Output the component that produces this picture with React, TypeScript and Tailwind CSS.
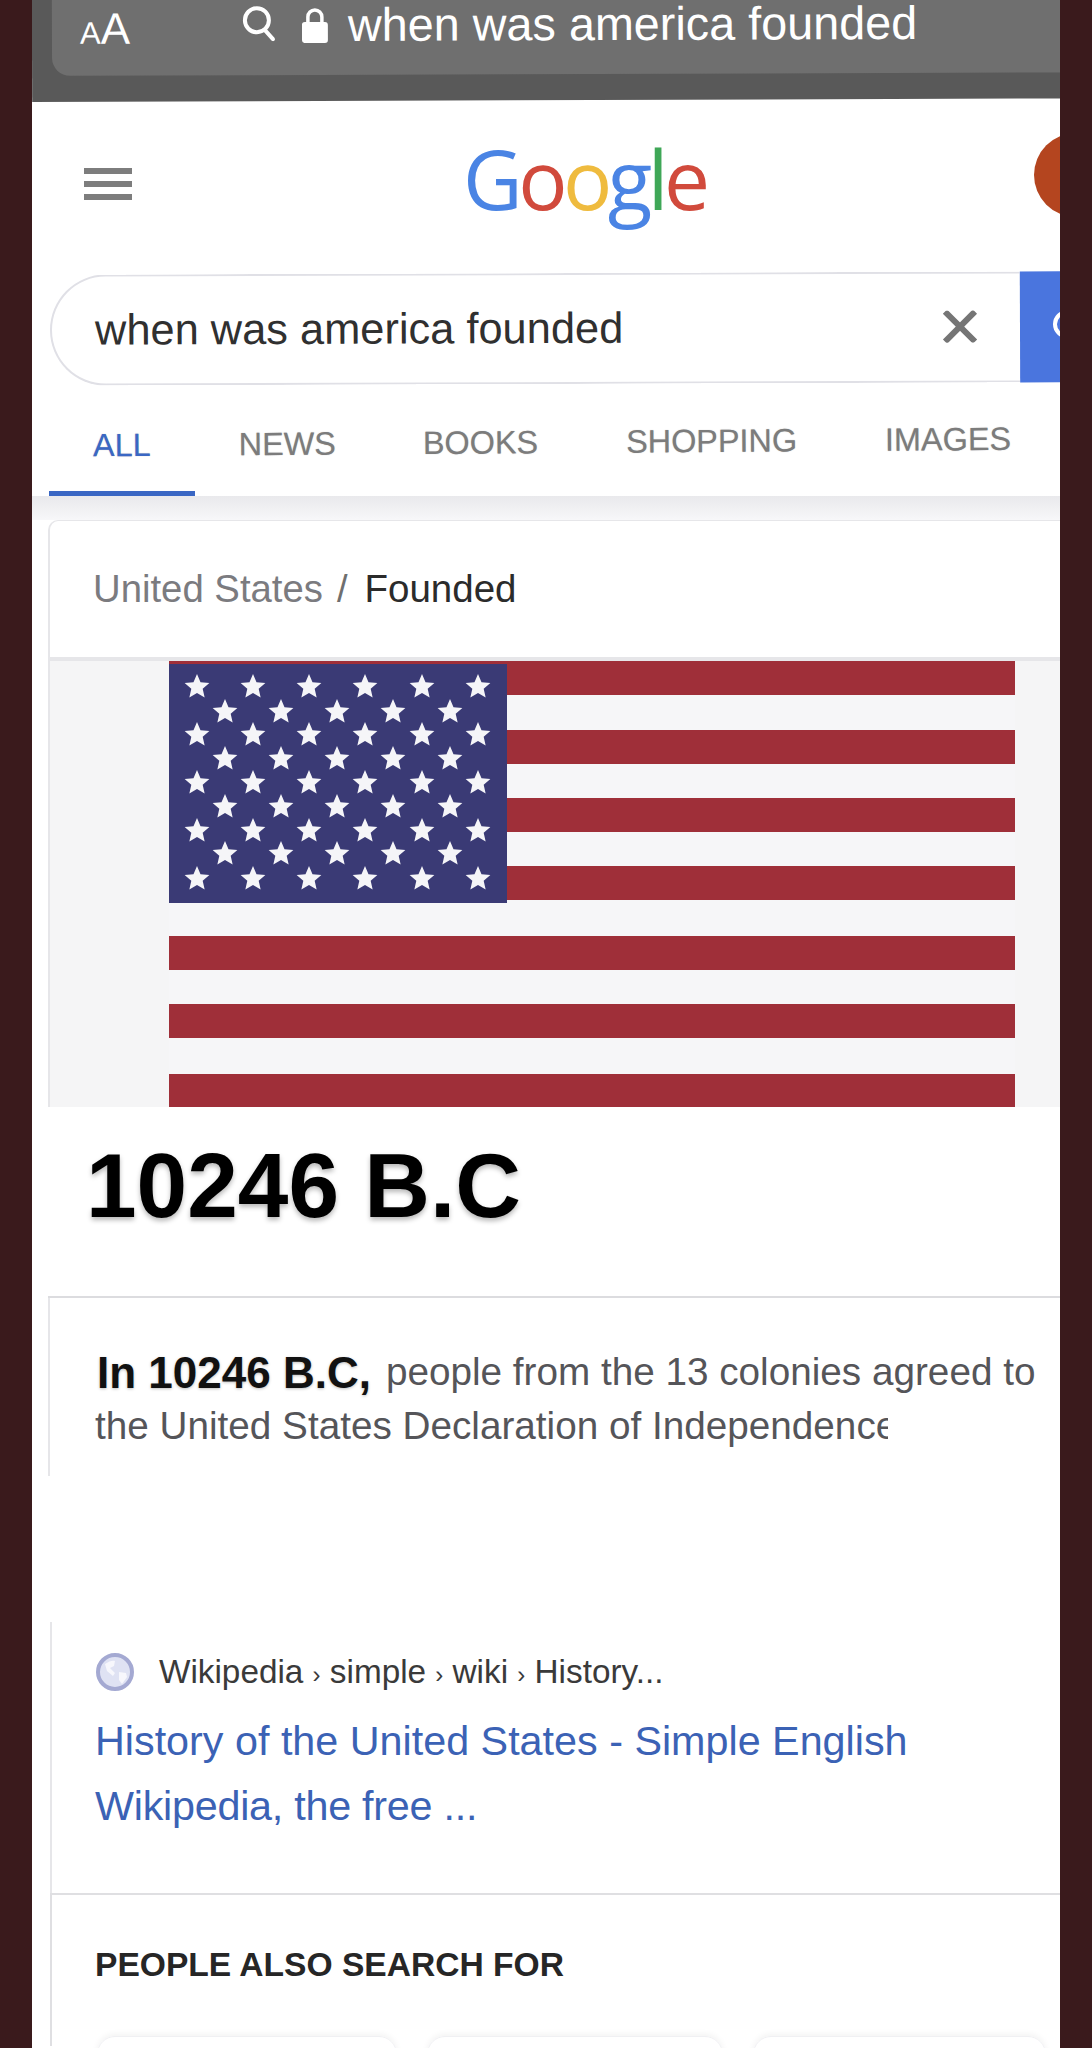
const sans = { fontFamily: '"Liberation Sans", Arial, sans-serif' };

function starPoints(cx: number, cy: number, r: number) {
  const pts: string[] = [];
  for (let i = 0; i < 10; i++) {
    const radius = i % 2 === 0 ? r : r * 0.46;
    const angle = -Math.PI / 2 + (i * Math.PI) / 5;
    pts.push(`${cx + radius * Math.cos(angle)},${cy + radius * Math.sin(angle)}`);
  }
  return pts.join(" ");
}

function Flag() {
  const stripes = [0, 69, 137, 205, 275, 343, 413];
  const longRow = [28, 84, 140, 196, 253, 309];
  const shortRow = [56, 112, 168, 224, 281];
  const longY = [26, 74, 122, 170, 218];
  const shortY = [51, 98, 146, 193];
  return (
    <svg width="846" height="446" viewBox="0 0 846 446" className="block">
      <rect width="846" height="446" fill="#f6f6f8" />
      {stripes.map((y) => (
        <rect key={y} x="0" y={y} width="846" height="34" fill="#9f2f39" />
      ))}
      <rect x="0" y="3" width="338" height="239" fill="#3a3a75" />
      <g className="blur-[0.5px]">
        {longY.map((y) =>
          longRow.map((x) => <polygon key={`${x}-${y}`} points={starPoints(x, y, 13)} fill="#f5f5f8" />),
        )}
        {shortY.map((y) =>
          shortRow.map((x) => <polygon key={`${x}-${y}`} points={starPoints(x, y, 13)} fill="#f5f5f8" />),
        )}
      </g>
    </svg>
  );
}

function Globe() {
  return (
    <svg width="40" height="40" viewBox="0 0 40 40" className="shrink-0 blur-[0.6px]">
      <circle cx="20" cy="20" r="17" fill="#dfe2f3" stroke="#a4a9d2" strokeWidth="4" />
      <path d="M10 12c4-3 8-4 10-3l-1 5-4 2 5 5-2 3-6-5z" fill="#f7f7fc" />
      <path d="M24 20l7 1 1 4-5 7-3-4z" fill="#f7f7fc" />
    </svg>
  );
}

function SearchGlyph() {
  return (
    <svg width="34" height="36" viewBox="0 0 34 36" fill="none" stroke="#ffffff" strokeWidth="4" strokeLinecap="round" className="shrink-0">
      <circle cx="15" cy="15" r="12" />
      <path d="M23 25l8 9" />
    </svg>
  );
}

function Lock() {
  return (
    <svg width="26" height="36" viewBox="0 0 26 36" className="shrink-0">
      <path d="M6 17V10a7 7 0 0 1 14 0v7" fill="none" stroke="#ffffff" strokeWidth="3.5" />
      <rect x="0" y="15" width="26" height="21" rx="3" fill="#ffffff" />
    </svg>
  );
}

const tabs = [
  { label: "ALL", className: "text-[#3a67c4]", left: "ml-0" },
  { label: "NEWS", className: "text-[#7c7c7c]", left: "ml-[88px]" },
  { label: "BOOKS", className: "text-[#7c7c7c]", left: "ml-[87px]" },
  { label: "SHOPPING", className: "text-[#7c7c7c]", left: "ml-[88px]" },
  { label: "IMAGES", className: "text-[#7c7c7c]", left: "ml-[88px]" },
];

export default function App() {
  return (
    <div className="w-[1092px] h-[2048px] bg-[#3a1a1c] overflow-hidden" style={sans}>
      <div className="ml-[32px] w-[1028px] h-[2048px] bg-white overflow-hidden">
        {/* Browser chrome */}
        <div className="h-[102px] bg-[#595959] -rotate-[0.2deg] origin-left w-[1040px]">
          <div className="ml-[20px] h-[76px] bg-[#6f6f6f] rounded-bl-[18px] flex items-start">
            <div className="ml-[28px] mt-[7px] text-white flex items-baseline leading-[44px]">
              <span className="text-[31px]">A</span>
              <span className="text-[44px]">A</span>
            </div>
            <div className="ml-[112px] mt-[6px] shrink-0">
              <SearchGlyph />
            </div>
            <div className="ml-[26px] mt-[8px] shrink-0">
              <Lock />
            </div>
            <span className="ml-[20px] mt-[4px] text-[46.75px] leading-[44px] text-white whitespace-nowrap">when was america founded</span>
          </div>
        </div>

        {/* Logo row */}
        <div className="h-[171px] flex items-center">
          <div className="ml-[52px] w-[48px] shrink-0 flex flex-col gap-[7px] -mt-[8px]">
            <div className="h-[6px] bg-[#7d7d7d]" />
            <div className="h-[6px] bg-[#7d7d7d]" />
            <div className="h-[6px] bg-[#7d7d7d]" />
          </div>
          <div
            className="ml-[331px] w-[246px] shrink-0 text-[82px] leading-[90px] tracking-[-4.5px] font-medium whitespace-nowrap -mt-[20px]"
            style={{ fontFamily: '"Open Sans", sans-serif' }}
          >
            <span className="text-[#4a84e4]">G</span>
            <span className="text-[#d14a3c]">o</span>
            <span className="text-[#efbb3e]">o</span>
            <span className="text-[#4a84e4]">g</span>
            <span className="text-[#3fa757]">l</span>
            <span className="text-[#d14a3c]">e</span>
          </div>
          <div className="ml-[325px] w-[84px] h-[84px] shrink-0 rounded-full bg-[#b4451f] -mt-[26px]" />
        </div>

        {/* Search field */}
        <div className="h-[113px] ml-[18px] flex -rotate-[0.2deg] w-[1020px]">
          <div className="w-[970px] h-[111px] rounded-l-[56px] border-2 border-r-0 border-[#e0e0e6] bg-white flex items-center">
            <span className="ml-[43px] text-[43.4px] text-[#303030] whitespace-nowrap">when was america founded</span>
            <svg width="34" height="32" viewBox="0 0 34 32" fill="none" stroke="#757575" strokeWidth="6" className="ml-[320px] shrink-0 -mt-[2px]">
              <path d="M2 1l30 30M32 1L2 31" />
            </svg>
          </div>
          <div className="w-[50px] h-[111px] bg-[#4a75de] shrink-0 flex items-center overflow-hidden">
            <div className="ml-[32px] shrink-0">
              <SearchGlyph />
            </div>
          </div>
        </div>

        {/* Result type tabs */}
        <div className="h-[110px] flex flex-col">
          <div className="h-[105px] pt-[36px] ml-[61px] flex text-[32.4px] leading-[40px] -rotate-[0.4deg] w-[960px] [text-shadow:0_0_1px_rgba(90,90,90,0.45)]">
            {tabs.map((t) => (
              <span key={t.label} className={`${t.className} ${t.left} whitespace-nowrap`}>
                {t.label}
              </span>
            ))}
          </div>
          <div className="ml-[17px] w-[146px] h-[5px] bg-[#3a67c4]" />
        </div>

        {/* Gap between tabs and card */}
        <div className="h-[24px] bg-gradient-to-b from-[#e9e9ec] to-[#f7f7f9]" />

        {/* Answer card */}
        <div className="ml-[16px]">
          <div className="h-[141px] border-l-2 border-t border-b-4 border-[#e6e6e9] rounded-tl-[10px] bg-white flex items-center">
            <span className="ml-[43px] text-[38.3px] text-[#7b7b7f] whitespace-nowrap">United States</span>
            <span className="ml-[14px] text-[38px] text-[#6f6f6f]">/</span>
            <span className="ml-[17px] text-[38.5px] text-[#2b2b2b] whitespace-nowrap">Founded</span>
          </div>

          <div className="h-[446px] bg-[#f5f5f6] pl-[119px] border-l-2 border-[#e6e6e9]">
            <Flag />
          </div>

          <div className="h-[191px] border-b-2 border-[#dcdcdf] pt-[33px]">
            <h1 className="ml-[38px] text-[91px] leading-[92px] font-bold text-black whitespace-nowrap [text-shadow:0_3px_5px_rgba(0,0,0,0.28)]">
              10246 B.C
            </h1>
          </div>

          <div className="h-[178px] border-l-2 border-[#e6e6e9] pt-[45px]">
            <p className="ml-[47px] h-[54px] leading-[54px] text-[38.7px] text-[#555559] whitespace-nowrap">
              <span className="inline-block translate-y-[3px] text-[44px] font-bold text-[#111111] [text-shadow:0_1px_3px_rgba(0,0,0,0.25)]">In 10246 B.C,</span>
              <span className="ml-[15px]">people from the 13 colonies agreed to</span>
            </p>
            <p className="ml-[45px] mt-[2px] w-[793px] overflow-hidden h-[54px] leading-[54px] text-[38.7px] text-[#555559] whitespace-nowrap">
              the United States Declaration of Independence
            </p>
          </div>
          <div className="h-[146px]" />

          <div className="border-l-2 border-[#e6e6e9] h-[271px] ml-[2px] pt-[30px]">
            <div className="ml-[43px] h-[40px] flex items-center">
              <Globe />
              <span className="ml-[24px] text-[33.3px] text-[#3a3a3a] whitespace-nowrap">
                Wikipedia <span className="text-[24px]">›</span> simple <span className="text-[24px]">›</span> wiki <span className="text-[24px]">›</span> History...
              </span>
            </div>
            <div className="ml-[43px] mt-[17px] text-[41.3px] leading-[65px] text-[#3b62b5]">
              <div className="whitespace-nowrap">History of the United States - Simple English</div>
              <div className="whitespace-nowrap tracking-[-0.25px]">Wikipedia, the free ...</div>
            </div>
          </div>

          <div className="h-[153px] ml-[2px] border-t-2 border-l-2 border-[#dfdfe2] pt-[50px]">
            <h2 className="ml-[43px] text-[33.6px] leading-[40px] font-bold text-[#262626] whitespace-nowrap">PEOPLE ALSO SEARCH FOR</h2>
            <div className="ml-[45px] mt-[51px] flex gap-[30px]">
              <div className="w-[300px] h-[40px] shrink-0 rounded-t-[18px] border border-[#f0f0f3] shadow-[0_-2px_6px_rgba(0,0,0,0.05)]" />
              <div className="w-[296px] h-[40px] shrink-0 rounded-t-[18px] border border-[#f0f0f3] shadow-[0_-2px_6px_rgba(0,0,0,0.05)]" />
              <div className="w-[293px] h-[40px] shrink-0 rounded-t-[18px] border border-[#f0f0f3] shadow-[0_-2px_6px_rgba(0,0,0,0.05)]" />
            </div>
          </div>
        </div>
      </div>
    </div>
  );
}
